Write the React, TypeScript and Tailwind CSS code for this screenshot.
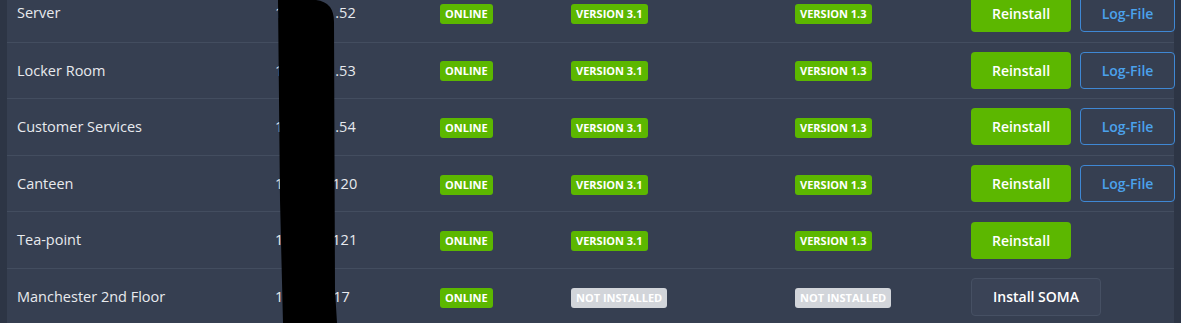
type Row = {
    name: string;
    ipTail: string;
    gap: string;
    installed: boolean;
    logFile: boolean;
};

const rows: Row[] = [
    { name: "Server", ipTail: ".52", gap: "w-[52px]", installed: true, logFile: true },
    { name: "Locker Room", ipTail: ".53", gap: "w-[52px]", installed: true, logFile: true },
    { name: "Customer Services", ipTail: ".54", gap: "w-[52px]", installed: true, logFile: true },
    { name: "Canteen", ipTail: "120", gap: "w-[49px]", installed: true, logFile: true },
    { name: "Tea-point", ipTail: "121", gap: "w-[49px]", installed: true, logFile: false },
    { name: "Manchester 2nd Floor", ipTail: "17", gap: "w-[50px]", installed: false, logFile: false },
];

const Badge = ({ label, muted }: { label: string; muted?: boolean }) => (
    <span
        className={
            muted
                ? "inline-block rounded-[3px] bg-[#d2d5da] px-[5px] py-[3px] text-[11px] font-bold leading-[14px] text-white"
                : "inline-block rounded-[3px] bg-[#5cb700] px-[5px] py-[3px] text-[11px] font-bold leading-[14px] text-white"
        }
    >
        {label}
    </span>
);

const App = () => {
    return (
        <div
            className="relative h-[323px] w-[1181px] overflow-hidden bg-[#2d3545] px-[7px] text-[14px] text-[#e8eaee]"
            style={{ fontFamily: '"Open Sans", "Noto Sans", sans-serif' }}
        >
            <div className="-mt-[15px] flex flex-col">
                {rows.map((row, index) => (
                    <div
                        key={index}
                        className={
                            "grid h-[56.6px] grid-cols-[258px_165px_131px_224px_176px_1fr] items-center bg-[#363f51] pl-[10px] " +
                            (index > 0 ? "border-t border-[#434d5f]" : "")
                        }
                    >
                        <div className="text-[14.5px]">{row.name}</div>
                        <div className="flex text-[14.5px]">
                            <span>1</span>
                            <span className={"inline-block " + row.gap} />
                            <span>{row.ipTail}</span>
                        </div>
                        <div>
                            <Badge label="ONLINE" />
                        </div>
                        <div>
                            {row.installed ? <Badge label="VERSION 3.1" /> : <Badge label="NOT INSTALLED" muted />}
                        </div>
                        <div>
                            {row.installed ? <Badge label="VERSION 1.3" /> : <Badge label="NOT INSTALLED" muted />}
                        </div>
                        <div className="flex gap-[9px]">
                            {row.installed ? (
                                <button className="h-[37px] w-[100px] rounded-[4px] bg-[#5cb700] font-semibold text-white">
                                    Reinstall
                                </button>
                            ) : (
                                <button className="h-[38px] w-[130px] rounded-[4px] border border-[#465063] bg-[#3a4356] font-semibold text-white">
                                    Install SOMA
                                </button>
                            )}
                            {row.logFile && (
                                <button className="h-[37px] w-[95px] rounded-[4px] border border-[#3f88d4] font-semibold text-[#4ba2ec]">
                                    Log-File
                                </button>
                            )}
                        </div>
                    </div>
                ))}
            </div>
            <svg className="absolute left-0 top-0" width="1181" height="323">
                <path d="M278 0 L316 0 Q334 2 334 22 L335 290 L337 323 L283 323 L280 200 Z" fill="#000" />
            </svg>
        </div>
    );
};

export default App;
